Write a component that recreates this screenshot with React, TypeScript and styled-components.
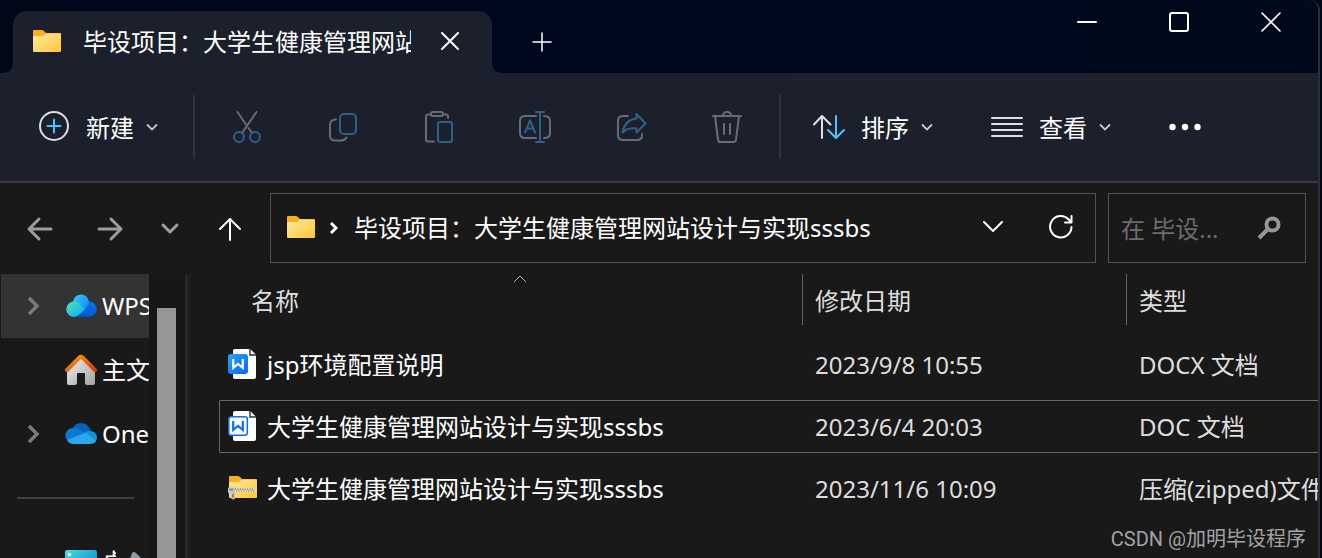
import React from 'react';
import styled, { createGlobalStyle } from 'styled-components';

const GlobalStyle = createGlobalStyle`
  * { box-sizing: border-box; }
  body {
    margin: 0;
    background: #020816;
    color: #fff;
    font: 24px/32px "Noto Sans", "Noto Sans CJK SC", sans-serif;
  }
  button, input { font: inherit; color: inherit; }
  svg { flex: none; }
`;

const ExplorerWindow = styled.div`
  position: relative;
  display: flex;
  flex-direction: column;
  height: 100vh;
  margin-right: 2px;
  border-right: 2px solid #2b2f3a;
  border-top-right-radius: 10px;
  background: #191919;
  overflow: hidden;
`;

const PlainButton = styled.button`
  display: flex;
  align-items: center;
  justify-content: center;
  flex: none;
  padding: 0;
  border: 0;
  background: none;
  white-space: nowrap;
`;

/* Title bar */

const TitleBar = styled.header`
  display: flex;
  flex: none;
  height: 73px;
  padding-left: 13px;
  background: linear-gradient(90deg, #000718, #000820 20%, #000820 60%, #000a1a);
`;

const Tab = styled.div`
  position: relative;
  display: flex;
  align-items: center;
  width: 479px;
  margin-top: 11px;
  padding-left: 20px;
  border-radius: 14px 14px 0 0;
  background: #1b202c;

  &::before,
  &::after {
    content: '';
    position: absolute;
    bottom: 0;
    width: 8px;
    height: 8px;
  }
  &::before {
    right: 100%;
    background: radial-gradient(circle at 0 0, transparent 7px, #1b202c 8px);
  }
  &::after {
    left: 100%;
    background: radial-gradient(circle at 100% 0, transparent 7px, #1b202c 8px);
  }
`;

const TabTitle = styled.span`
  flex: none;
  width: 328px;
  margin: 0 17px 0 22px;
  overflow: hidden;
  white-space: nowrap;
`;

const TabClose = styled(PlainButton)`
  width: 44px;
  height: 44px;
`;

const NewTab = styled(PlainButton)`
  width: 60px;
  margin: 11px 0 0 20px;
`;

const WindowControls = styled.div`
  display: flex;
  align-items: flex-start;
  margin: 0 1px 0 auto;
`;

const ControlButton = styled(PlainButton)`
  width: 92px;
  height: 44px;
`;

/* Command bar */

const CommandBar = styled.div`
  display: flex;
  align-items: center;
  flex: none;
  height: 110px;
  padding-left: 38px;
  border-bottom: 2px solid #3a3a3d;
  background: #1b202c;
`;

const LabelButton = styled(PlainButton)<{ $gap?: number }>`
  gap: 12px;
  margin-left: ${({ $gap = 0 }) => $gap}px;

  span { padding-top: 2px; margin-left: 4px; }
`;

const Separator = styled.div<{ $before: number; $after: number }>`
  width: 2px;
  height: 64px;
  margin: 0 ${({ $after }) => $after}px 0 ${({ $before }) => $before}px;
  background: #303440;
`;

const IconButton = styled(PlainButton)`
  width: 96px;
  height: 64px;
`;

const MoreButton = styled(PlainButton)`
  width: 64px;
  height: 64px;
  margin-left: 42px;
`;

/* Navigation row */

const NavBar = styled.nav`
  display: flex;
  flex: none;
  padding: 10px 12px 11px 5px;
`;

const NavButton = styled(PlainButton)<{ $width: number }>`
  width: ${({ $width }) => $width}px;
`;

const AddressBar = styled.div`
  display: flex;
  align-items: center;
  flex: 1;
  min-width: 0;
  height: 70px;
  margin: 0 12px 0 5px;
  padding-left: 16px;
  border: 1px solid #535353;
`;

const PathArrow = styled(PlainButton)`
  margin-left: 15px;
`;

const PathButton = styled(PlainButton)`
  margin: 0 auto 0 16px;
`;

const AddressButton = styled(PlainButton)`
  width: 68px;
  height: 60px;
  padding-bottom: 2px;
`;

const SearchBox = styled.form`
  display: flex;
  align-items: center;
  width: 198px;
  height: 70px;
  padding: 0 24px 0 12px;
  border: 1px solid #535353;
`;

const SearchInput = styled.input`
  flex: 1;
  min-width: 0;
  height: 60px;
  padding: 0;
  border: 0;
  outline: 0;
  background: none;

  &::placeholder { color: #6c6c6c; opacity: 1; }
`;

/* Body */

const Body = styled.div`
  display: flex;
  flex: 1;
  min-height: 0;
`;

const Sidebar = styled.aside`
  flex: none;
  width: 149px;
  padding-left: 1px;
  overflow: hidden;
`;

const SidebarItem = styled.a<{ $active?: boolean }>`
  display: flex;
  align-items: center;
  height: 64px;
  padding-left: 22px;
  background: ${({ $active }) => ($active ? '#333' : 'none')};
  color: inherit;
  text-decoration: none;
  white-space: nowrap;
`;

const Expander = styled.span`
  display: flex;
  flex: none;
  width: 42px;
  padding-left: 4px;
`;

const SidebarLabel = styled.span<{ $short?: boolean }>`
  flex: none;
  width: ${({ $short }) => ($short ? '14px' : 'auto')};
  margin: 0 12px 0 5px;
  overflow: hidden;
`;

const SidebarRule = styled.hr`
  height: 2px;
  margin: 31px 15px 31px 16px;
  border: 0;
  background: #3f3f3f;
`;

const ScrollTrack = styled.div`
  flex: none;
  width: 36px;
  padding: 34px 9px 0 8px;
  background: #171717;
`;

const ScrollThumb = styled.div`
  height: 100%;
  background: #969696;
`;

const Splitter = styled.div`
  flex: none;
  width: 6px;
  border-left: 3px solid #282828;
  background: #1e1e1e;
`;

const FilePane = styled.main`
  flex: 1;
  min-width: 0;
  padding-left: 28px;
  overflow: hidden;
`;

const FileTable = styled.table`
  width: 100%;
  table-layout: fixed;
  border-collapse: collapse;
`;

const HeadCell = styled.th<{ $width?: number }>`
  position: relative;
  width: ${({ $width }) => ($width ? `${$width}px` : 'auto')};
  height: 60px;
  padding: 0;
  vertical-align: top;
  font-weight: 400;
  color: #dedede;
`;

const SortButton = styled(PlainButton)<{ $first?: boolean }>`
  justify-content: flex-start;
  width: 100%;
  height: 51px;
  padding: 2px 0 0 ${({ $first }) => ($first ? 32 : 12)}px;
  border-left: ${({ $first }) => ($first ? '0' : '1px solid #636363')};
`;

const SortMark = styled.svg`
  position: absolute;
  top: 0;
  left: 294px;
`;

const Cell = styled.td`
  height: 62px;
  padding: 4px 0 5px;
  color: #dedede;
`;

const CellBox = styled.div<{ $focused?: boolean; $name?: boolean }>`
  display: flex;
  align-items: center;
  gap: 9px;
  height: 53px;
  padding-left: ${({ $name }) => ($name ? 8 : 13)}px;
  border: solid ${({ $focused }) => ($focused ? '#696969' : 'transparent')};
  border-width: 1px 0 1px ${({ $name }) => ($name ? '1px' : '0')};
  border-radius: ${({ $name }) => ($name ? '2px 0 0 2px' : '0')};
  color: ${({ $name }) => ($name ? '#fff' : 'inherit')};
  white-space: nowrap;
  overflow: hidden;
`;

const Watermark = styled.div`
  position: absolute;
  right: 12px;
  bottom: 5px;
  color: #a3a3a3;
  font: 20px/28px Roboto, "Noto Sans CJK SC", sans-serif;
`;

/* Icons */

const GREY = '#696c74';
const BLUE = '#2c6289';

type LineIconProps = { size?: number; stroke?: string; width?: number; children: React.ReactNode };

const LineIcon = ({ size = 32, stroke = GREY, width = 2, children }: LineIconProps) => (
  <svg width={size} height={size} viewBox={`0 0 ${size} ${size}`} fill="none" stroke={stroke}
    strokeWidth={width} strokeLinecap="round" strokeLinejoin="round" aria-hidden="true">
    {children}
  </svg>
);

const FolderIcon = () => (
  <svg width="28" height="26" viewBox="0 0 28 26" aria-hidden="true">
    <defs>
      <linearGradient id="folder" x1="0" y1="0" x2="1" y2="1">
        <stop offset="0" stopColor="#ffe9a2" />
        <stop offset="1" stopColor="#ffc636" />
      </linearGradient>
    </defs>
    <path d="M0 2Q0 1 1 1H8.500Q10 1 11 2L13 4H27Q28 4 28 5V12H0Z" fill="#fbb01a" />
    <path d="M0 8Q0 7 1 7H10L13 4.500H27Q28 4.500 28 5.500V22Q28 23 27 23H1Q0 23 0 22Z" fill="url(#folder)" />
  </svg>
);

const Caret = () => (
  <svg width="12" height="8" viewBox="0 0 12 8" fill="none" stroke="#c8c9cc" strokeWidth="1.800" aria-hidden="true">
    <path d="M1 1.500L6 6.500L11 1.500" />
  </svg>
);

const Chevron = () => (
  <svg width="14" height="20" viewBox="0 0 14 20" fill="none" stroke="#7b7b7b" strokeWidth="3.500" aria-hidden="true">
    <path d="M2 2L10 10L2 18" />
  </svg>
);

const WpsCloudIcon = () => (
  <svg width="32" height="24" viewBox="0 0 32 24" aria-hidden="true">
    <defs>
      <linearGradient id="wpsTop" x1="0" y1="0" x2="1" y2="1">
        <stop offset="0" stopColor="#35d0ff" /><stop offset="1" stopColor="#0a7bff" />
      </linearGradient>
      <linearGradient id="wpsLeft" x1="0" y1="0" x2="1" y2="1">
        <stop offset="0" stopColor="#48ecae" /><stop offset="1" stopColor="#0aa6ff" />
      </linearGradient>
      <linearGradient id="wpsRight" x1="0" y1="0" x2="0" y2="1">
        <stop offset="0" stopColor="#087bee" /><stop offset="1" stopColor="#0650d2" />
      </linearGradient>
    </defs>
    <path d="M12 23L18 11Q21 7.500 24 7.500A7.700 7.700 0 0 1 24 23Z" fill="url(#wpsRight)" />
    <path d="M8 9A8 8 0 0 1 24 8Q24 11 21 14L16 19Z" fill="url(#wpsTop)" />
    <path d="M9 7.500Q13 7.500 16 11L20 15L15 20Q12 23 9 23A7.700 7.700 0 0 1 9 7.500Z" fill="url(#wpsLeft)" />
  </svg>
);

const HomeIcon = () => (
  <svg width="32" height="32" viewBox="0 0 32 32" aria-hidden="true">
    <defs>
      <linearGradient id="wall" x1="0" y1="0" x2="1" y2="1">
        <stop offset="0" stopColor="#f2f2f2" /><stop offset="1" stopColor="#a2a2a2" />
      </linearGradient>
      <linearGradient id="roof" x1="0" y1="0" x2="1" y2="1">
        <stop offset="0" stopColor="#fb9a12" /><stop offset="1" stopColor="#cf3f09" />
      </linearGradient>
    </defs>
    <path d="M2 15L16 3L30 15V29Q30 31 28 31H22Q20 31 20 29V20Q20 19 19 19H13Q12 19 12 20V29Q12 31 10 31H4Q2 31 2 29Z" fill="url(#wall)" />
    <path d="M2 16L14.500 3.500Q16 2 17.500 3.500L30 16" fill="none" stroke="url(#roof)" strokeWidth="4" strokeLinecap="round" />
  </svg>
);

const OneDriveIcon = () => (
  <svg width="32" height="22" viewBox="0 0 32 22" aria-hidden="true">
    <path d="M7 6Q10 0 16 0Q23 0 26 8L18 13Z" fill="#0763b8" />
    <path d="M2 17A7.500 7.500 0 0 1 9 5Q12 5 15 7L22 11L8 19Z" fill="#0d79d6" />
    <path d="M19 10Q22 7.500 25 8Q31 8 32 14Q32 18 29 20Z" fill="#1590df" />
    <path d="M2 17L21 9.500L31 18Q29 21 25 21H8Q4 21 2 17Z" fill="#29a8ec" />
  </svg>
);

const DesktopIcon = () => (
  <svg width="32" height="26" viewBox="0 0 32 26" aria-hidden="true">
    <defs>
      <linearGradient id="desk" x1="0" y1="0" x2="1" y2="1">
        <stop offset="0" stopColor="#45e0e4" /><stop offset="1" stopColor="#0872c4" />
      </linearGradient>
    </defs>
    <rect y="1" width="32" height="25" rx="2" fill="url(#desk)" />
    <path d="M3 4h3v3h-3zM3 10h3v3h-3z" fill="#fff" />
  </svg>
);

const PinIcon = () => (
  <svg width="16" height="24" viewBox="0 0 16 24" aria-hidden="true">
    <path d="M4 3Q6 1 8 3L15 10L13 12L10 16L9 21L-1 11L2 9Z" fill="#9098a0" />
  </svg>
);

const WriterIcon = ({ filled }: { filled?: boolean }) => (
  <svg width="30" height="34" viewBox="0 0 30 34" aria-hidden="true">
    <defs>
      <linearGradient id="badge" x1="0" y1="0" x2="1" y2="1">
        <stop offset="0" stopColor="#26a4ff" /><stop offset="1" stopColor="#0a63ff" />
      </linearGradient>
    </defs>
    <path d="M7 1H22L28 7V29Q28 31 26 31H7Q5 31 5 29V3Q5 1 7 1Z" fill="#fff" />
    <path d="M22 1V7H28" fill="#fff" stroke="#2a2c30" strokeWidth="1.400" />
    {filled
      ? <rect x="0" y="6" width="20" height="20" rx="3" fill="url(#badge)" />
      : <rect x=".8" y="6.800" width="18.500" height="18.500" rx="2.500" fill="#fff" stroke="#0a6cff" strokeWidth="1.500" />}
    <path d="M5.200 11V20L10 16L14.800 20V11" fill="none" stroke={filled ? '#fff' : '#0a6cff'} strokeWidth="2.200" />
  </svg>
);

const ZipIcon = () => (
  <svg width="30" height="28" viewBox="0 0 30 28" aria-hidden="true">
    <path d="M1 2Q1 1 2 1H9.500Q11 1 12 2L14 4H28Q29 4 29 5V12H1Z" fill="#fbb01a" />
    <path d="M1 8Q1 7 2 7H11L14 4.500H28Q29 4.500 29 5.500V22Q29 23 28 23H2Q1 23 1 22Z" fill="url(#folder)" />
    <path d="M5 15H29" stroke="#eee6cd" strokeWidth="4" />
    <path d="M7 14.200H27M8 16H27" stroke="#6b6248" strokeWidth="1.200" strokeDasharray="1.200 1.200" />
    <rect x="26" y="13" width="3" height="4" fill="#d4d4d4" />
    <path d="M0 12.500H7V23Q7 24.500 5 24.500Q3 24.500 3 22.500V18H0Z" fill="#c6c2bd" />
    <path d="M1.500 14.500H5M5 19V22.500" stroke="#77736f" strokeWidth="1.500" />
  </svg>
);

/* Data */

const tools = [
  {
    label: '剪切',
    art: <>
      <path d="M6.500 1L15 13.500M17.500 17L21 22M25.500 1L11 22" />
      <g stroke={BLUE}><circle cx="8" cy="26" r="5" /><circle cx="24" cy="26" r="5" /></g>
    </>,
  },
  {
    label: '复制',
    art: <>
      <path d="M9 8.500Q3 8.500 3 14V24.500Q3 29.500 8 29.500H14Q18 29.500 19.500 26.500" />
      <rect x="13" y="3" width="16" height="20" rx="4" stroke={BLUE} />
    </>,
  },
  {
    label: '粘贴',
    art: <>
      <path d="M8 3.500H5Q3 3.500 3 5.500V28.500Q3 30.500 5 30.500H11M20 3.500H23Q25 3.500 25 5.500V7" />
      <rect x="8" y="1" width="12" height="4" rx="2" />
      <rect x="15" y="11" width="14" height="20" rx="2" stroke={BLUE} />
    </>,
  },
  {
    label: '重命名',
    art: <>
      <path d="M17 5H6Q1 5 1 10V22Q1 27 6 27H17M25 5Q31 5 31 10V22Q31 27 25 27" />
      <path d="M21 1V31M17 1H25M17 31H25M6 21.500L11 9.500L16 21.500M8 17.500H14" stroke={BLUE} />
    </>,
  },
  {
    label: '共享',
    art: <>
      <path d="M13 5H8Q3 5 3 10V24Q3 29 8 29H22Q27 29 27 24V23" />
      <path d="M21.500 3L30.500 12.500L21.500 21.500V17.500Q13 16.500 7.500 21.500Q9.500 9 21.500 7.500Z" stroke={BLUE} />
    </>,
  },
  {
    label: '删除',
    art: <path d="M2 5H30M12 5Q12 1 16 1T20 5M4 5L7 28.500Q7.300 31 9.500 31H22.500Q24.700 31 25 28.500L28 5M13 13V23M19 13V23" />,
  },
];

const files = [
  { name: 'jsp环境配置说明', date: '2023/9/8 10:55', type: 'DOCX 文档', icon: <WriterIcon filled /> },
  { name: '大学生健康管理网站设计与实现sssbs', date: '2023/6/4 20:03', type: 'DOC 文档', icon: <WriterIcon />, focused: true },
  { name: '大学生健康管理网站设计与实现sssbs', date: '2023/11/6 10:09', type: '压缩(zipped)文件夹', icon: <ZipIcon /> },
];

const places = [
  { label: 'WPS云盘', icon: <WpsCloudIcon />, expandable: true, active: true },
  { label: '主文件夹', icon: <HomeIcon /> },
  { label: 'OneDrive', icon: <OneDriveIcon />, expandable: true },
];

export default function App() {
  return (
    <>
      <GlobalStyle />
      <ExplorerWindow>
        <TitleBar>
          <Tab>
            <FolderIcon />
            <TabTitle>毕设项目：大学生健康管理网站设计与实现sssbs</TabTitle>
            <TabClose aria-label="关闭标签页">
              <LineIcon size={20} stroke="#fff"><path d="M2 1L18 17M18 1L2 17" /></LineIcon>
            </TabClose>
          </Tab>
          <NewTab aria-label="新建标签页">
            <LineIcon size={20} stroke="#fff" width={1.5}><path d="M10 1V19M1 10H19" /></LineIcon>
          </NewTab>
          <WindowControls>
            <ControlButton aria-label="最小化">
              <LineIcon size={20} stroke="#fff"><path d="M1 10H19" /></LineIcon>
            </ControlButton>
            <ControlButton aria-label="最大化">
              <LineIcon size={20} stroke="#fff"><rect x="1" y="1" width="18" height="18" rx="2" /></LineIcon>
            </ControlButton>
            <ControlButton aria-label="关闭">
              <LineIcon size={20} stroke="#fff" width={1.6}><path d="M1 1L19 19M19 1L1 19" /></LineIcon>
            </ControlButton>
          </WindowControls>
        </TitleBar>

        <CommandBar>
          <LabelButton>
            <LineIcon stroke="#dfe0e2">
              <circle cx="16" cy="15" r="14" />
              <path d="M16 8.500V21.500M9.500 15H22.500" stroke="#4cc2ff" />
            </LineIcon>
            <span>新建</span>
            <Caret />
          </LabelButton>
          <Separator $before={35} $after={4} />
          {tools.map(({ label, art }) => (
            <IconButton key={label} aria-label={label}><LineIcon>{art}</LineIcon></IconButton>
          ))}
          <Separator $before={4} $after={0} />
          <LabelButton $gap={32}>
            <LineIcon stroke="#dfe0e2">
              <path d="M9 27V5M1 13.500L9 5L17.500 13.500" />
              <path d="M23 5V27M15 19L23 27L31 19" stroke="#4cc2ff" />
            </LineIcon>
            <span>排序</span>
            <Caret />
          </LabelButton>
          <LabelButton $gap={58}>
            <LineIcon stroke="#dfe0e2"><path d="M1 7H31M1 13H31M1 19H31M1 25H31" /></LineIcon>
            <span>查看</span>
            <Caret />
          </LabelButton>
          <MoreButton aria-label="更多">
            <svg width="32" height="8" viewBox="0 0 32 8" fill="#fff" aria-hidden="true">
              <circle cx="3.500" cy="4" r="3.200" /><circle cx="16" cy="4" r="3.200" /><circle cx="28.500" cy="4" r="3.200" />
            </svg>
          </MoreButton>
        </CommandBar>

        <NavBar aria-label="导航">
          <NavButton $width={70} aria-label="后退">
            <LineIcon size={28} stroke="#9d9d9d" width={3}><path d="M25 15H4M13 5L3 15L13 25" /></LineIcon>
          </NavButton>
          <NavButton $width={70} aria-label="前进">
            <LineIcon size={28} stroke="#9d9d9d" width={3}><path d="M3 15H24M15 5L25 15L15 25" /></LineIcon>
          </NavButton>
          <NavButton $width={50} aria-label="最近位置">
            <LineIcon size={20} stroke="#9d9d9d" width={3}><path d="M3 7L10 14L17 7" /></LineIcon>
          </NavButton>
          <NavButton $width={70} aria-label="向上">
            <LineIcon size={28} stroke="#fff"><path d="M14 26V5M4 15L14 5L24 15" /></LineIcon>
          </NavButton>
          <AddressBar>
            <FolderIcon />
            <PathArrow aria-label="展开路径">
              <svg width="8" height="14" viewBox="0 0 8 14" fill="none" stroke="#fff" strokeWidth="3" aria-hidden="true">
                <path d="M1 2L6 7L1 12" />
              </svg>
            </PathArrow>
            <PathButton>毕设项目：大学生健康管理网站设计与实现sssbs</PathButton>
            <AddressButton aria-label="以前的位置">
              <LineIcon size={20} stroke="#fff"><path d="M1 5L10 14L19 5" /></LineIcon>
            </AddressButton>
            <AddressButton aria-label="刷新">
              <LineIcon size={24} stroke="#fff"><path d="M22.500 12A10.700 10.700 0 1 1 19.500 4.300L22 7M22.500 1V7.500H16" /></LineIcon>
            </AddressButton>
          </AddressBar>
          <SearchBox onSubmit={(event) => event.preventDefault()}>
            <SearchInput aria-label="搜索" placeholder="在 毕设..." />
            <svg width="24" height="24" viewBox="0 0 24 24" fill="none" stroke="#969696" aria-hidden="true">
              <circle cx="15.500" cy="8.500" r="6" strokeWidth="4" />
              <path d="M11 13L2 22" strokeWidth="4" />
            </svg>
          </SearchBox>
        </NavBar>

        <Body>
          <Sidebar>
            {places.map(({ label, icon, expandable, active }) => (
              <SidebarItem key={label} href="#" $active={active}>
                <Expander>{expandable && <Chevron />}</Expander>
                {icon}
                <SidebarLabel>{label}</SidebarLabel>
              </SidebarItem>
            ))}
            <SidebarRule />
            <SidebarItem href="#">
              <Expander />
              <DesktopIcon />
              <SidebarLabel $short>桌面</SidebarLabel>
              <PinIcon />
            </SidebarItem>
          </Sidebar>
          <ScrollTrack><ScrollThumb /></ScrollTrack>
          <Splitter />
          <FilePane>
            <FileTable>
              <thead>
                <tr>
                  <HeadCell $width={583}>
                    <SortButton $first>名称</SortButton>
                    <SortMark width="14" height="9" viewBox="0 0 14 9" fill="none" stroke="#b4b4b4" aria-hidden="true">
                      <path d="M1 8L7 2L13 8" />
                    </SortMark>
                  </HeadCell>
                  <HeadCell $width={324}><SortButton>修改日期</SortButton></HeadCell>
                  <HeadCell><SortButton>类型</SortButton></HeadCell>
                </tr>
              </thead>
              <tbody>
                {files.map(({ name, date, type, icon, focused }) => (
                  <tr key={date}>
                    <Cell><CellBox $name $focused={focused}>{icon}{name}</CellBox></Cell>
                    <Cell><CellBox $focused={focused}>{date}</CellBox></Cell>
                    <Cell><CellBox $focused={focused}>{type}</CellBox></Cell>
                  </tr>
                ))}
              </tbody>
            </FileTable>
          </FilePane>
        </Body>
        <Watermark>CSDN @加明毕设程序</Watermark>
      </ExplorerWindow>
    </>
  );
}
